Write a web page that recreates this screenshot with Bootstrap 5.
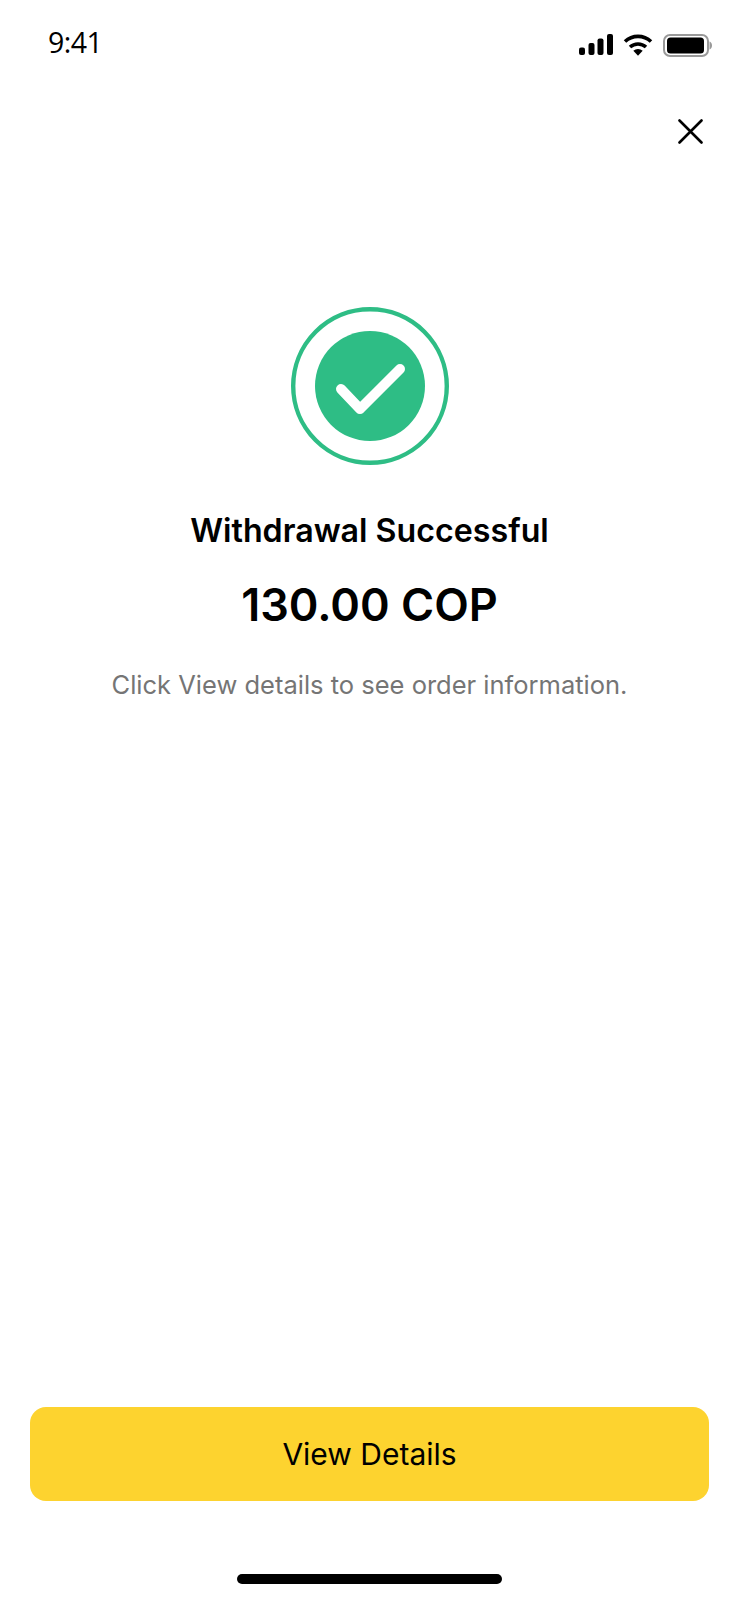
<!DOCTYPE html>
<html lang="en">
<head>
    <meta charset="UTF-8">
    <title>Withdrawal Successful</title>
    <link href="https://cdn.jsdelivr.net/npm/bootstrap@5.3.2/dist/css/bootstrap.min.css" rel="stylesheet">
    <style>
        body { font-family: "Inter", "Liberation Sans", sans-serif; color: #000; background: #fff; }
        .screen { height: 1600px; width: 739px; overflow: hidden; }
        .status-bar { height: 90px; padding: 22px 27px 0 48px; }
        .status-time { font-family: "Open Sans", sans-serif; font-size: 28.5px; line-height: 41px; letter-spacing: -.5px; }
        .status-icons { padding-top: 12px; gap: 10px; }
        .close-row { height: 63px; padding: 19px 36px 0 0; }
        .close-btn { background: none; border: 0; padding: 0; line-height: 0; }
        .success-icon { margin-top: 154px; line-height: 0; }
        .title-text { font-size: 32.2px; font-weight: 600; line-height: 40px; margin: 46px 0 0; }
        .amount-text { font-size: 45px; font-weight: 600; line-height: 52px; margin: 28px 0 0; }
        .hint-text { font-size: 25.5px; line-height: 34px; color: #757575; margin: 37px 0 0; }
        .cta-wrap { padding: 0 30px; }
        .cta-btn { display: block; width: 100%; height: 94px; border-radius: 16px; border: 0; background: #fdd32f; color: #000; font-size: 30px; }
        .cta-btn:hover { background: #fdd32f; color: #000; }
        .home-bar { width: 265px; height: 10px; background: #000; border-radius: 5px; margin: 73px auto 16px; }
    </style>
</head>
<body>

<div class="screen d-flex flex-column">
    <!-- Status bar -->
    <div class="status-bar d-flex justify-content-between align-items-start">
        <span class="status-time">9:41</span>
        <div class="status-icons d-flex align-items-start">
            <svg width="34" height="22" viewBox="0 0 34 22" fill="#000">
                <rect x="0" y="13.5" width="6" height="7.5" rx="2"/>
                <rect x="9.5" y="9" width="6" height="12" rx="2"/>
                <rect x="18.5" y="4.5" width="6" height="16.5" rx="2"/>
                <rect x="28" y="0" width="6" height="21" rx="2"/>
            </svg>
            <svg width="30" height="22" viewBox="0 0 30 22" fill="none" stroke="#000" stroke-width="3.6">
                <path d="M2 7.5A19 19 0 0 1 28 7.5"/>
                <path d="M7 13A12 12 0 0 1 23 13"/>
                <path d="M15 21.7L10.3 16.8A7 7 0 0 1 19.7 16.8Z" fill="#000" stroke="none"/>
            </svg>
            <svg width="49" height="23" viewBox="0 0 49 23">
                <rect x="1" y="1" width="44" height="21" rx="6" fill="none" stroke="#999" stroke-width="2"/>
                <rect x="4" y="3.5" width="37" height="16" rx="3.5" fill="#000"/>
                <path d="M46.5 7.5c1.5.4 2.5 2 2.5 4s-1 3.6-2.5 4z" fill="#999"/>
            </svg>
        </div>
    </div>

    <!-- Close -->
    <div class="close-row d-flex justify-content-end">
        <button class="close-btn" type="button" aria-label="Close">
            <svg width="25" height="25" viewBox="0 0 25 25" stroke="#000" stroke-width="2.6" stroke-linecap="round">
                <path d="M1.5 1.5L23.5 23.5M23.5 1.5L1.5 23.5"/>
            </svg>
        </button>
    </div>

    <!-- Result -->
    <div class="flex-grow-1 text-center">
        <div class="success-icon">
            <svg width="158" height="158" viewBox="0 0 158 158">
                <circle cx="79" cy="79" r="76.8" fill="none" stroke="#2ebd85" stroke-width="4.4"/>
                <circle cx="79" cy="79" r="55" fill="#2ebd85"/>
                <path d="M50 82L69 102L109 62" fill="none" stroke="#fff" stroke-width="10" stroke-linecap="round" stroke-linejoin="round"/>
            </svg>
        </div>
        <h1 class="title-text">Withdrawal Successful</h1>
        <p class="amount-text">130.00 COP</p>
        <p class="hint-text">Click View details to see order information.</p>
    </div>

    <!-- Action -->
    <div class="cta-wrap">
        <button class="btn cta-btn" type="button">View Details</button>
    </div>
    <div class="home-bar"></div>
</div>

<script src="https://cdn.jsdelivr.net/npm/bootstrap@5.3.2/dist/js/bootstrap.bundle.min.js"></script>
</body>
</html>
